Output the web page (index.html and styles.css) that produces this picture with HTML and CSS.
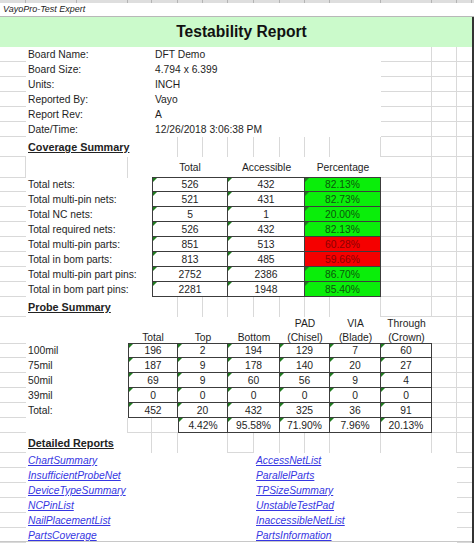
FILE: index.html
```html
<!DOCTYPE html>
<html>
<head>
<meta charset="utf-8">
<title>Testability Report</title>
<link rel="stylesheet" href="styles.css">
</head>
<body>
<div class="sheet">
  <div class="row band"><i></i><i></i><i></i><i></i><i></i><i></i><i></i><i></i><i></i><i></i><i></i><i></i><i></i><i></i><i></i></div>
  <div class="apptitle">VayoPro-Test Expert</div>
  <div class="main">
    <div class="banner">Testability Report</div>

    <div class="row"><div class="gut"></div><div class="lbl s3">Board Name:</div><div class="val s8">DFT Demo</div><div class="gc"></div><div class="gc"></div><div class="ge"></div></div>
    <div class="row"><div class="gut"></div><div class="lbl s3">Board Size:</div><div class="val s8">4.794 x 6.399</div><div class="gc"></div><div class="gc"></div><div class="ge"></div></div>
    <div class="row"><div class="gut"></div><div class="lbl s3">Units:</div><div class="val s8">INCH</div><div class="gc"></div><div class="gc"></div><div class="ge"></div></div>
    <div class="row"><div class="gut"></div><div class="lbl s3">Reported By:</div><div class="val s8">Vayo</div><div class="gc"></div><div class="gc"></div><div class="ge"></div></div>
    <div class="row"><div class="gut"></div><div class="lbl s3">Report Rev:</div><div class="val s8">A</div><div class="gc"></div><div class="gc"></div><div class="ge"></div></div>
    <div class="row"><div class="gut"></div><div class="lbl s3">Date/Time:</div><div class="val s8">12/26/2018 3:06:38 PM</div><div class="gc"></div><div class="gc"></div><div class="ge"></div></div>

    <!-- Coverage summary -->
    <div class="row h20"><div class="gut"></div><div class="head s3"><span>Coverage Summary</span></div><div class="gv"></div><div class="gv"></div><div class="gv"></div><div class="gv"></div><div class="gv"></div><div class="gv"></div><div class="gv"></div><div class="gv"></div><div class="gc"></div><div class="gc"></div><div class="ge"></div></div>
    <div class="row h20"><div class="gut gr"></div><div class="s2 gv"></div><div></div><div class="th s3">Total</div><div class="th s3">Accessible</div><div class="th s2">Percentage</div><div class="gc"></div><div class="gc"></div><div class="ge"></div></div>

    <div class="row t"><div class="gut"></div><div class="lbl s3">Total nets:</div><div class="n s3 f">526</div><div class="n s3">432</div><div class="n s2 pg">82.13%</div><div class="gc"></div><div class="gc"></div><div class="ge"></div></div>
    <div class="row"><div class="gut"></div><div class="lbl s3">Total multi-pin nets:</div><div class="n s3 f">521</div><div class="n s3">431</div><div class="n s2 pg">82.73%</div><div class="gc"></div><div class="gc"></div><div class="ge"></div></div>
    <div class="row"><div class="gut"></div><div class="lbl s3">Total NC nets:</div><div class="n s3 f">5</div><div class="n s3">1</div><div class="n s2 pg">20.00%</div><div class="gc"></div><div class="gc"></div><div class="ge"></div></div>
    <div class="row"><div class="gut"></div><div class="lbl s3">Total required nets:</div><div class="n s3 f">526</div><div class="n s3">432</div><div class="n s2 pg">82.13%</div><div class="gc"></div><div class="gc"></div><div class="ge"></div></div>
    <div class="row"><div class="gut"></div><div class="lbl s3">Total multi-pin parts:</div><div class="n s3 f">851</div><div class="n s3">513</div><div class="n s2 pr">60.28%</div><div class="gc"></div><div class="gc"></div><div class="ge"></div></div>
    <div class="row"><div class="gut"></div><div class="lbl s3">Total in bom parts:</div><div class="n s3 f">813</div><div class="n s3">485</div><div class="n s2 pr">59.66%</div><div class="gc"></div><div class="gc"></div><div class="ge"></div></div>
    <div class="row"><div class="gut"></div><div class="lbl s3">Total multi-pin part pins:</div><div class="n s3 f">2752</div><div class="n s3">2386</div><div class="n s2 pg">86.70%</div><div class="gc"></div><div class="gc"></div><div class="ge"></div></div>
    <div class="row"><div class="gut"></div><div class="lbl s3">Total in bom part pins:</div><div class="n s3 f">2281</div><div class="n s3">1948</div><div class="n s2 pg">85.40%</div><div class="gc"></div><div class="gc"></div><div class="ge"></div></div>

    <!-- Probe summary -->
    <div class="row h20"><div class="gut"></div><div class="head s3"><span>Probe Summary</span></div><div class="gv"></div><div class="gv"></div><div class="gv"></div><div class="gv"></div><div class="gv"></div><div class="gv"></div><div class="gv"></div><div class="gv"></div><div class="gc"></div><div class="gc"></div><div class="ge"></div></div>
    <div class="row h26"><div class="gut"></div><div class="s2"></div><div class="th2 s2">Total</div><div class="th2 s2">Top</div><div class="th2 s2">Bottom</div><div class="th2 s2">PAD<br>(Chisel)</div><div class="th2">VIA<br>(Blade)</div><div class="th2">Through<br>(Crown)</div><div class="gc"></div><div class="ge"></div></div>

    <div class="row t"><div class="gut"></div><div class="lbl s2">100mil</div><div class="n s2 f">196</div><div class="n s2">2</div><div class="n s2">194</div><div class="n s2">129</div><div class="n">7</div><div class="n">60</div><div class="gc"></div><div class="ge"></div></div>
    <div class="row"><div class="gut"></div><div class="lbl s2">75mil</div><div class="n s2 f">187</div><div class="n s2">9</div><div class="n s2">178</div><div class="n s2">140</div><div class="n">20</div><div class="n">27</div><div class="gc"></div><div class="ge"></div></div>
    <div class="row"><div class="gut"></div><div class="lbl s2">50mil</div><div class="n s2 f">69</div><div class="n s2">9</div><div class="n s2">60</div><div class="n s2">56</div><div class="n">9</div><div class="n">4</div><div class="gc"></div><div class="ge"></div></div>
    <div class="row"><div class="gut"></div><div class="lbl s2">39mil</div><div class="n s2 f">0</div><div class="n s2">0</div><div class="n s2">0</div><div class="n s2">0</div><div class="n">0</div><div class="n">0</div><div class="gc"></div><div class="ge"></div></div>
    <div class="row"><div class="gut"></div><div class="lbl s2">Total:</div><div class="n s2 f">452</div><div class="n s2">20</div><div class="n s2">432</div><div class="n s2">325</div><div class="n">36</div><div class="n">91</div><div class="gc"></div><div class="ge"></div></div>
    <div class="row"><div class="gut"></div><div class="s2 gv"></div><div class="gc"></div><div class="ge"></div><div class="n s2 f">4.42%</div><div class="n s2">95.58%</div><div class="n s2">71.90%</div><div class="n">7.96%</div><div class="n">20.13%</div><div class="gc"></div><div class="ge"></div></div>

    <!-- Detailed reports -->
    <div class="row h20"><div class="gut"></div><div class="head s2"><span>Detailed Reports</span></div><div class="gv"></div><div class="gv"></div><div class="gv s2"></div><div class="gc"></div><div class="gv"></div><div class="gv"></div><div class="gv"></div><div class="gv"></div><div class="gv"></div><div class="gv"></div><div class="ge"></div></div>

    <div class="row"><div class="gut"></div><div class="lnk s7"><a href="#">ChartSummary</a></div><div class="lnk s6"><a href="#">AccessNetList</a></div><div class="ge"></div></div>
    <div class="row"><div class="gut"></div><div class="lnk s7"><a href="#">InsufficientProbeNet</a></div><div class="lnk s6"><a href="#">ParallelParts</a></div><div class="ge"></div></div>
    <div class="row"><div class="gut"></div><div class="lnk s7"><a href="#">DeviceTypeSummary</a></div><div class="lnk s6"><a href="#">TPSizeSummary</a></div><div class="ge"></div></div>
    <div class="row"><div class="gut"></div><div class="lnk s7"><a href="#">NCPinList</a></div><div class="lnk s6"><a href="#">UnstableTestPad</a></div><div class="ge"></div></div>
    <div class="row"><div class="gut"></div><div class="lnk s7"><a href="#">NailPlacementList</a></div><div class="lnk s6"><a href="#">InaccessibleNetList</a></div><div class="ge"></div></div>
    <div class="row last"><div class="gut"></div><div class="lnk s7"><a href="#">PartsCoverage</a></div><div class="lnk s6"><a href="#">PartsInformation</a></div><div class="ge"></div></div>
    <div class="foot"></div>
  </div>
</div>
</body>
</html>
```

FILE: styles.css
```css
* { box-sizing: border-box; margin: 0; padding: 0; }

body {
  margin: 0;
  background: #ffffff;
  font-family: "Liberation Sans", Arial, sans-serif;
  font-size: 10.3px;
  color: #1e1e1e;
}

.sheet {
  width: 474px;
  height: 543px;
  overflow: hidden;
  background: #ffffff;
}

.row {
  display: grid;
  grid-template-columns: 26px 51px 51px 24px 26px 25px 25px 26px 26px 25px 25px 51px 51px 25px 15px;
  height: 15px;
}

.h20 { height: 20px; }
.h26 { height: 26px; }
.last { height: 13px; }

.s2 { grid-column: span 2; }
.s3 { grid-column: span 3; }
.s6 { grid-column: span 6; }
.s7 { grid-column: span 7; }
.s8 { grid-column: span 8; }

/* top column-header remnant */
.band {
  height: 3px;
  background: #dedede;
}
.band i { border-right: 1px solid #b4b4b4; }

.apptitle {
  height: 14px;
  border-bottom: 1px solid #b8b8b8;
  font-style: italic;
  font-size: 9px;
  line-height: 13px;
  padding-left: 3px;
  color: #222;
}

.main {
  width: 474px;
  border-right: 2px solid #333333;
}

.banner {
  height: 30px;
  background: #cbfacb;
  font-weight: bold;
  font-size: 15.6px;
  line-height: 30px;
  text-align: center;
  padding-left: 11px;
  color: #111;
}

/* spreadsheet grid lines */
.gut { border-bottom: 1px solid #d9d9d9; }
.gr { border-right: 1px solid #d9d9d9; }
.gc { border-right: 1px solid #d9d9d9; border-bottom: 1px solid #d9d9d9; }
.gv { border-right: 1px solid #d9d9d9; }
.ge { border-bottom: 1px solid #d9d9d9; }

.lbl {
  padding-left: 2px;
  line-height: 15px;
  white-space: nowrap;
}
.val {
  padding-left: 3px;
  line-height: 15px;
  white-space: nowrap;
}

.head {
  padding-left: 2px;
  line-height: 20px;
  font-weight: bold;
  font-size: 10.8px;
  white-space: nowrap;
  color: #222;
}
.head span {
  text-decoration: underline;
  text-underline-offset: 1px;
}

.th {
  text-align: center;
  line-height: 20px;
  padding-top: 1px;
}
.th2 {
  display: flex;
  flex-direction: column;
  justify-content: flex-end;
  align-items: center;
  text-align: center;
  line-height: 13.5px;
}

/* data cells */
.n {
  position: relative;
  display: flex;
  align-items: center;
  justify-content: center;
  border-right: 1px solid #3c3c3c;
  border-bottom: 1px solid #3c3c3c;
  color: #1e1e1e;
}
.n.f { border-left: 1px solid #3c3c3c; }
.t .n { border-top: 1px solid #3c3c3c; }
.n::before {
  content: "";
  position: absolute;
  left: 0;
  top: 0;
  border-style: solid;
  border-width: 4px 4px 0 0;
  border-color: #1f7a1f transparent transparent transparent;
}
.pg { background: #0aee0a; color: #0b560b; }
.pr { background: #f50000; color: #8c0000; }
.pr::before { display: none; }

.lnk {
  padding-left: 2px;
  line-height: 15px;
  white-space: nowrap;
}
.lnk a {
  color: #3636e2;
  font-style: italic;
  text-decoration: underline;
}

.foot {
  height: 2px;
  border-top: 1px solid #c8c8c8;
}
```
